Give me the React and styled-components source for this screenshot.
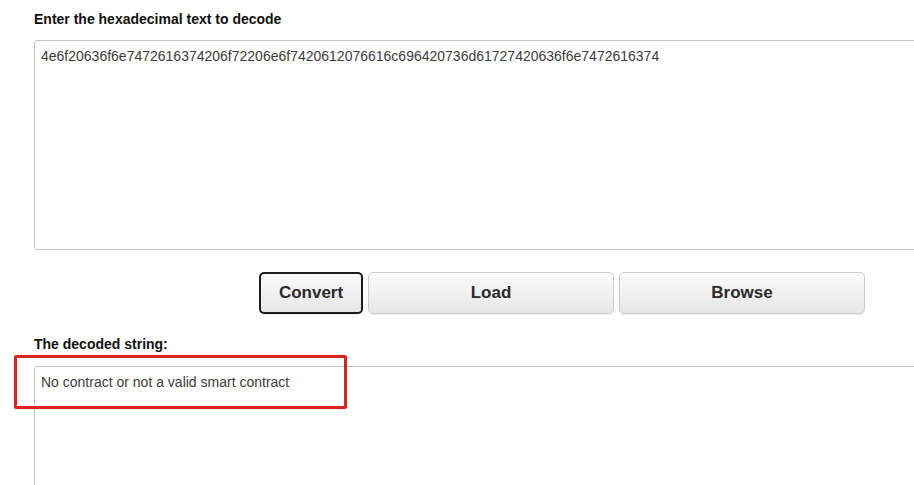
import React from "react";
import styled, { createGlobalStyle } from "styled-components";

const Global = createGlobalStyle`
  html, body { margin: 0; padding: 0; background: #fff; overflow: hidden; }
  body { font-family: "Liberation Sans", Arial, sans-serif; }
`;

const Page = styled.div`
  position: relative;
  width: 914px;
  height: 485px;
  overflow: hidden;
  padding: 11px 0 0 34px;
  box-sizing: border-box;
`;

const Label = styled.div`
  font-size: 14px;
  font-weight: bold;
  color: #111;
  line-height: 17px;
  margin-top: ${(p) => p.$mt || 0}px;
`;

const TextBox = styled.textarea`
  display: block;
  box-sizing: border-box;
  width: 900px;
  height: ${(p) => p.$h}px;
  margin-top: ${(p) => p.$mt}px;
  padding: 7px 6px;
  border: 1px solid #c4c4c4;
  border-radius: 3px;
  font-family: "Liberation Sans", Arial, sans-serif;
  font-size: 14px;
  line-height: 17px;
  color: #3c3c3c;
  resize: none;
  outline: none;
  background: #fff;
`;

const ButtonRow = styled.div`
  display: flex;
  gap: 5px;
  margin: 22px 0 0 225px;
`;

const Button = styled.button`
  box-sizing: border-box;
  width: ${(p) => p.$w}px;
  height: 42px;
  font-family: "Liberation Sans", Arial, sans-serif;
  font-size: 17px;
  font-weight: bold;
  color: #2a2a2a;
  background: linear-gradient(#fbfbfb, #e6e6e6);
  border: ${(p) => (p.$active ? "2px solid #1c1c1c" : "1px solid #cdcdcd")};
  border-radius: 5px;
  box-shadow: 0 1px 1px rgba(0, 0, 0, 0.08);
  padding: 0;
  cursor: pointer;
`;

const Output = styled.div`
  position: relative;
`;

const Highlight = styled.div`
  position: absolute;
  left: -20px;
  top: 19px;
  width: 333px;
  height: 54px;
  box-sizing: border-box;
  border: 3px solid #e0231a;
  border-radius: 2px;
  pointer-events: none;
`;

const hex =
  "4e6f20636f6e7472616374206f72206e6f7420612076616c696420736d61727420636f6e7472616374";

export default function App() {
  return (
    <>
      <Global />
      <Page>
        <Label>Enter the hexadecimal text to decode</Label>
        <TextBox $h={210} $mt={12} defaultValue={hex} />
        <ButtonRow>
          <Button $w={104} $active>Convert</Button>
          <Button $w={246}>Load</Button>
          <Button $w={246}>Browse</Button>
        </ButtonRow>
        <Output>
          <Label $mt={22}>The decoded string:</Label>
          <TextBox
            $h={160}
            $mt={13}
            readOnly
            defaultValue="No contract or not a valid smart contract"
          />
          <Highlight />
        </Output>
      </Page>
    </>
  );
}
